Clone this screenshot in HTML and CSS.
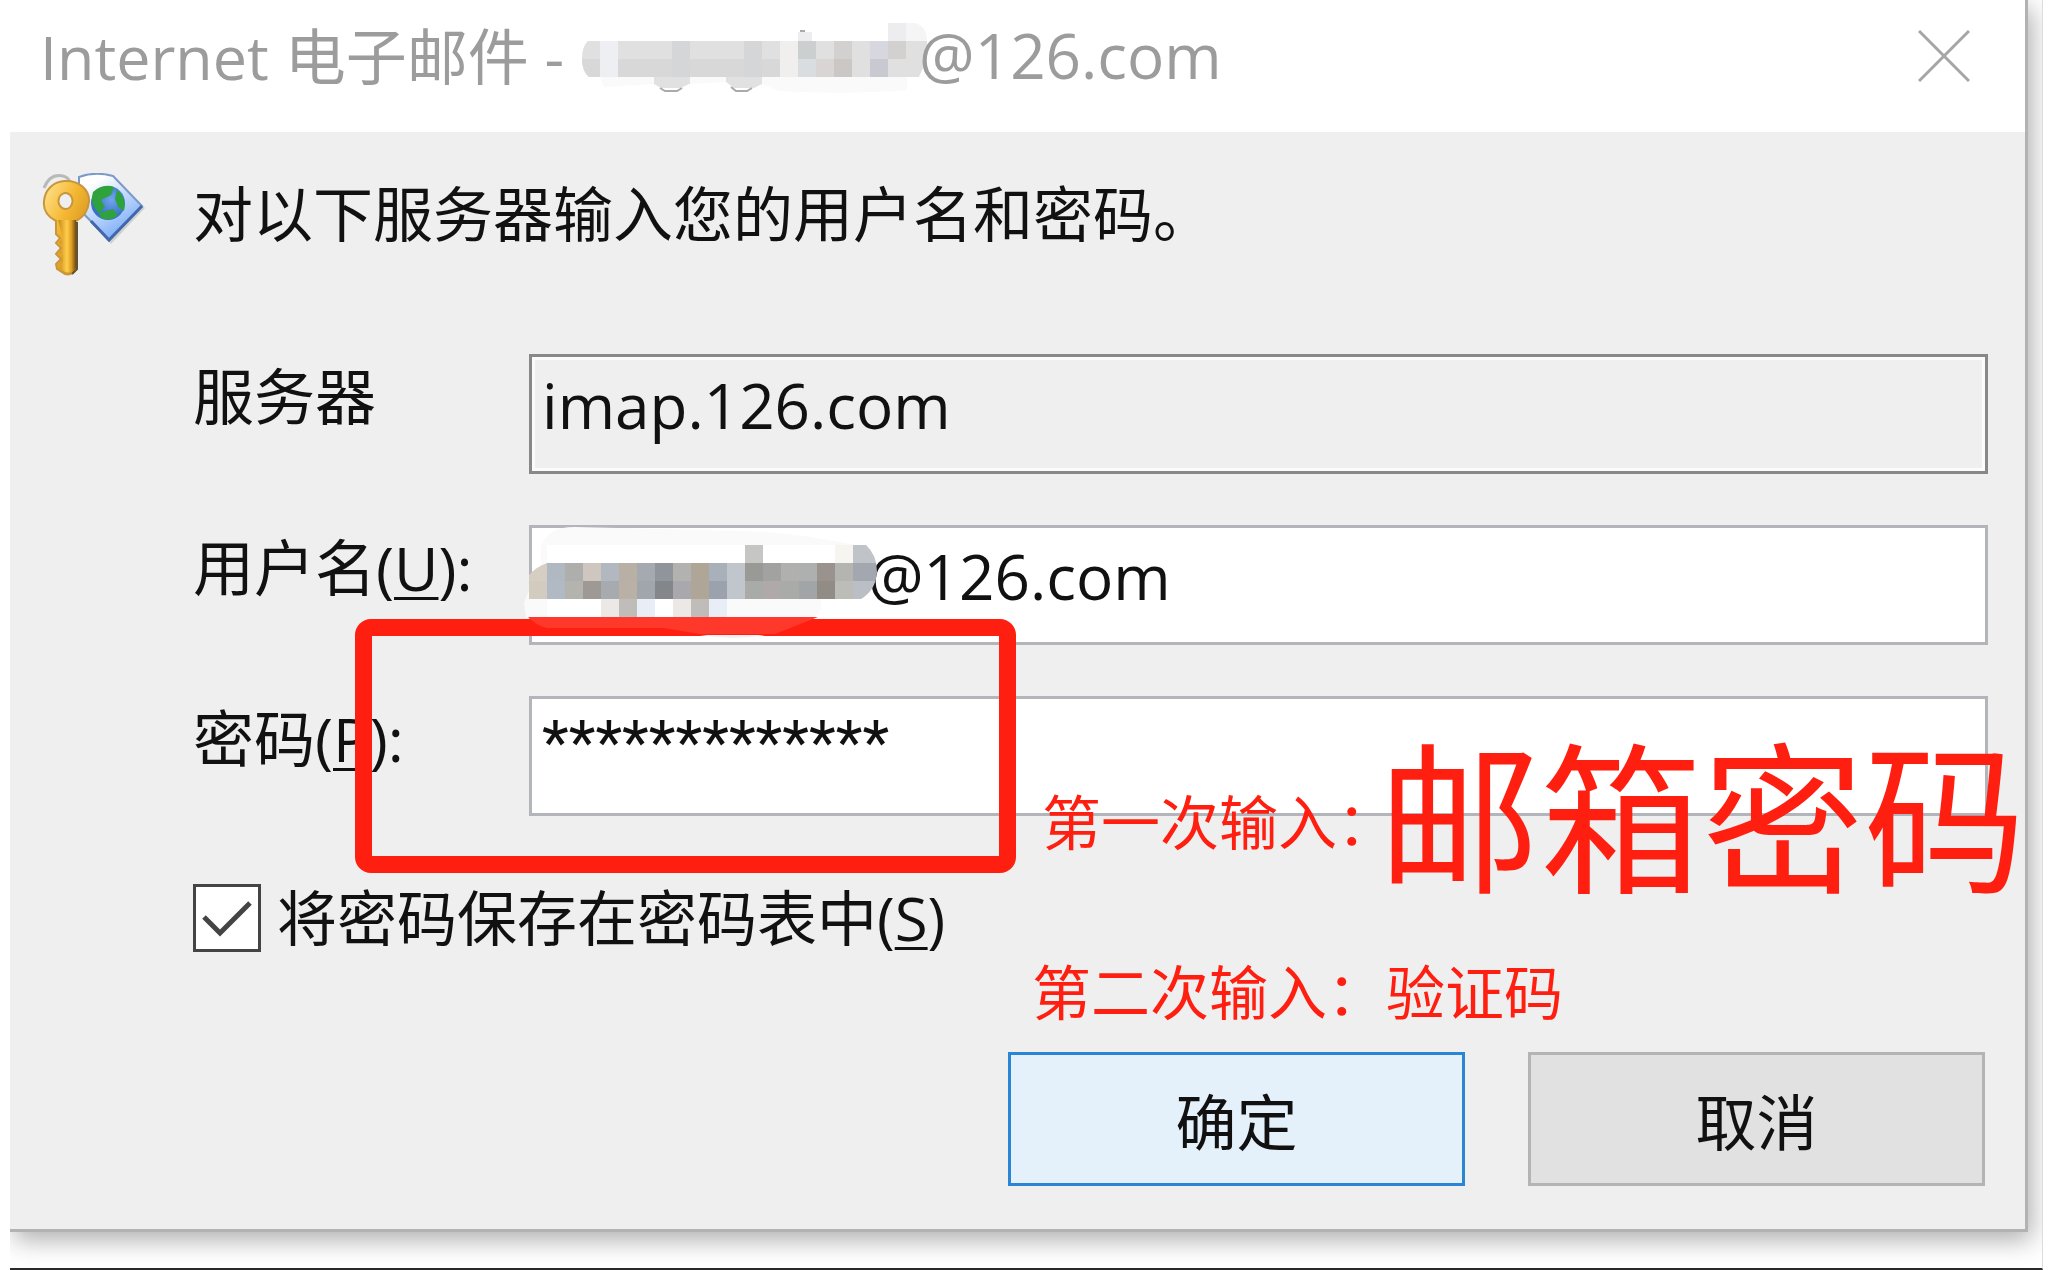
FILE: index.html
```html
<!DOCTYPE html>
<html lang="zh-CN">
<head>
    <meta charset="UTF-8">
    <title>Internet 电子邮件</title>
    <link rel="stylesheet" href="styles.css">
</head>
<body>
    <div id="wrap">
    <div class="dialog">
        <div class="titlebar">
            <h1>Internet 电子邮件 -</h1>
            <svg class="mosaic" width="345" height="80" viewBox="583 20 345 80">
                <defs>
                    <clipPath id="titleClip"><path d="M589 41H795V32H813V41H889V23H916Q928 26 928 41Q928 62 920 77L908 90Q850 95 780 91L763 84L755 88H735L727 82L690 84L682 88H662L655 84L605 87L601 77H590Q583 71 583 59Q583 46 589 41Z"/></clipPath>
                </defs>
                <g clip-path="url(#titleClip)">
                    <path fill="#e1e0e0" d="M583 41h345v36h-345z"/>
                    <path fill="#fafafa" d="M601 77h307v18h-307z"/>
                    <path fill="#d9d8d8" d="M583 59h18v18h-18zM619 59h162v18h-162z"/>
                    <path fill="#eeeff2" d="M601 41h18v36h-18z"/>
                    <path fill="#d5d6d8" d="M673 41h18v36h-18zM745 41h18v36h-18z"/>
                    <path fill="#f1efed" d="M781 41h18v36h-18z"/>
                    <path fill="#ededef" d="M799 30h18v11h-18zM889 23h18v18h-18z"/>
                    <path fill="#cccfd0" d="M799 41h18v18h-18z"/>
                    <path fill="#dadde0" d="M799 59h18v18h-18z"/>
                    <path fill="#d8d5d4" d="M817 59h18v18h-18z"/>
                    <path fill="#d2d1d0" d="M835 41h18v18h-18zM889 41h18v18h-18z"/>
                    <path fill="#cac7c4" d="M835 59h18v18h-18z"/>
                    <path fill="#d6d7df" d="M871 41h18v18h-18z"/>
                    <path fill="#c9cad1" d="M871 59h18v18h-18z"/>
                    <path fill="#f5f5f5" d="M907 23h21v18h-21z"/>
                    <path fill="#e2e1e1" d="M655 77h36v11h-36zM727 77h36v11h-36z"/>
                </g>
                <path d="M661 88l5 3h12l5-3M732 87l5 4h11l5-3M801 31h5" fill="none" stroke="#aaa" stroke-width="2"/>
            </svg>
            <span class="host">@126.com</span>
            <button class="close" type="button" aria-label="关闭">
                <svg width="52" height="52" viewBox="0 0 52 52"><path d="M1 1L51 51M51 1L1 51" stroke="#a6a6a6" stroke-width="3"/></svg>
            </button>
        </div>
        <form class="content">
            <div class="intro">
                <svg class="icon" width="112" height="112" viewBox="0 0 112 112">
                    <defs>
                        <linearGradient id="gold" x1="0" x2="1" y1="0" y2="1">
                            <stop offset="0" stop-color="#ffe694"/>
                            <stop offset=".4" stop-color="#f5b833"/>
                            <stop offset="1" stop-color="#bd7a10"/>
                        </linearGradient>
                        <linearGradient id="shaft" x1="0" x2="1">
                            <stop offset="0" stop-color="#c88a18"/>
                            <stop offset=".5" stop-color="#ffce4c"/>
                            <stop offset=".75" stop-color="#dd9d20"/>
                            <stop offset="1" stop-color="#6d4b18"/>
                        </linearGradient>
                        <linearGradient id="tag" x1="0" x2=".6" y1="0" y2="1">
                            <stop offset=".2" stop-color="#fff"/>
                            <stop offset="1" stop-color="#77aaf8"/>
                        </linearGradient>
                        <radialGradient id="sea" cx=".6" cy=".4">
                            <stop offset="0" stop-color="#71a6ee"/>
                            <stop offset="1" stop-color="#3a72c8"/>
                        </radialGradient>
                    </defs>
                    <path d="M40 5Q54 -1 73 4L104 35L70 71L42 40Z" fill="#999" opacity=".35"/>
                    <path d="M38 4Q54 -2 72 3L101 33L68 67L38 36Z" fill="url(#tag)" stroke="#7b9ac9" stroke-width="2"/>
                    <path d="M101 33L68 67L50 48" fill="none" stroke="#4068ab" stroke-width="3"/>
                    <circle cx="67" cy="30" r="17" fill="url(#sea)"/>
                    <path d="M52 19Q62 10 73 14L70 22L60 27L64 34L58 40Q48 30 52 19ZM76 17Q86 24 83 38L77 34L74 26ZM58 40L72 36L77 42Q69 49 60 45Z" fill="#2fa23d"/>
                    <path d="M3 15Q9 0 22 3Q31 5 29 17" fill="none" stroke="#b9b9b9" stroke-width="3"/>
                    <path fill-rule="evenodd" d="M23 8C38 7 49 17 48 29C47 39 41 45 35 48L35 96Q31 103 24 101L16 96L15 91L20 86L15 81L20 75L15 70L19 65L15 61V48C7 44 2 37 3 28C4 17 12 9 23 8ZM24 20A7 8 0 1 0 25 36A7 8 0 1 0 24 20Z" fill="url(#gold)" stroke="#c8963c" stroke-width="2"/>
                    <path d="M17 47H35V95Q30 101 24 99L19 95L22 88V82L18 80L22 75L18 69L22 65Z" fill="url(#shaft)"/>
                    <path d="M36 49V96L31 101" fill="none" stroke="#65512e" stroke-width="2"/>
                </svg>
                <p>对以下服务器输入您的用户名和密码。</p>
            </div>
            <div class="row">
                <label for="server">服务器</label>
                <div class="field"><input id="server" class="server" type="text" value="imap.126.com" readonly></div>
            </div>
            <div class="row">
                <label for="user">用户名(<u>U</u>):</label>
                <div class="field"><input id="user" class="user" type="text" value="@126.com"></div>
            </div>
            <div class="row">
                <label for="pwd">密码(<u>P</u>):</label>
                <div class="field"><input id="pwd" class="pwd" type="text" value="*************"></div>
            </div>
            <div class="save">
                <input id="save" type="checkbox" checked>
                <label for="save">将密码保存在密码表中(<u>S</u>)</label>
            </div>
            <div class="btns">
                <button class="ok" type="submit">确定</button>
                <button class="cancel" type="button">取消</button>
            </div>

            <!-- 标注 -->
            <div class="mark"></div>
            <svg class="mosaic-user" width="360" height="120" viewBox="520 522 360 120">
                <defs>
                    <clipPath id="userClip"><path d="M547 545H866Q877 555 877 572Q876 590 861 599H529V575Q536 567 547 563Z"/></clipPath>
                </defs>
                <path fill="#fafafa" d="M541 563V548Q545 527 575 527L740 531Q800 533 855 545V599H820Q825 611 812 618H526L524 603L529 590Z"/>
                <path fill="#ff382c" d="M528 617H818L775 634H700L664 628H548Q538 627 528 617Z"/>
                <path fill="#f0f0f0" d="M700 635H765Q735 641 700 635Z"/>
                <path fill="#fff" d="M547 545h330v18H547zM547 599h54v18h-54zM655 599h18v18h-18z"/>
                <g id="cells" clip-path="url(#userClip)"></g>
                <path fill="#ece8e6" d="M601 599h18v18h-18zM673 599h18v18h-18z"/>
                <path fill="#bfbcb9" d="M619 599h18v18h-18zM691 599h18v18h-18z"/>
                <path fill="#e9eef6" d="M637 599h18v18h-18zM709 599h18v18h-18z"/>
            </svg>
            <p class="note note1">第一次输入：</p>
            <p class="note big">邮箱密码</p>
            <p class="note note2">第二次输入：验证码</p>
        </form>
    </div>
    </div>

    <script>
        //马赛克色块
        let rows = [
            ",,,,,,,,,,,,#c6c7c5,,,,,#f6f5f0,#c0c4c8,#c0c4c8",
            "#d6cdc3,#b0b8c2,#aeaeac,#cfc6c0,#b1b8bf,#b8b0a5,#a5aab0,#90959b,#b2b2b0,#b0a698,#a8b0ba,#c0c6cb,#999996,#a2a2a1,#b0b0ae,#aeb0b0,#9a928c,#b4b5b0,#a2a7b0,#a2a7b0",
            "#d3cac0,#b1bac4,#b5b3ae,#9e9995,#a7abb0,#b9b1a5,#a0a6ac,#83868b,#a9a9ad,#b0a697,#9ba1ad,#c0c6cb,#a9aba9,#b0a9aa,#a9aba9,#a2a5a7,#928c87,#bcbdb9,#babfc6,#babfc6"
        ];
        let cells = document.querySelector("#cells");
        rows.forEach((row,y)=>{
            row.split(",").forEach((color,x)=>{
                if( !color ) return;
                let r = document.createElementNS("http://www.w3.org/2000/svg","rect");
                r.setAttribute("x",529 + x*18);
                r.setAttribute("y",545 + y*18);
                r.setAttribute("width",18);
                r.setAttribute("height",18);
                r.setAttribute("fill",color);
                cells.appendChild(r);
            });
        });
    </script>
</body>
</html>
```
FILE: styles.css
```css
*{box-sizing: border-box;}
body,p,h1{margin:0;}
body,input,button{
    font-family: "Open Sans","Noto Sans CJK SC",sans-serif;
    font-size: 61px;
    color: #111;
}
body{background: #fff;}

#wrap{
    overflow: hidden;
    min-height: 100vh;
    margin: 0 11px 0 10px;
    padding: 0 14px 0 0;
    border-right: 1px solid #ddd;
    border-bottom: 2px solid #2a2a2a;
}
.dialog{
    border-right: 3px solid #b2b2b2;
    border-bottom: 3px solid #b2b2b2;
    background: #efefef;
    box-shadow: 4px 8px 24px rgba(0,0,0,.32);
}

.titlebar{
    display: flex;
    align-items: center;
    height: 132px;
    padding: 0 55px 20px 30px;
    background: #fff;
    color: #9c9c9c;
}
.titlebar h1{
    padding-bottom: 6px;
    font-size: 61px;
    font-weight: normal;
    white-space: nowrap;
}
.titlebar .mosaic{
    flex: none;
    margin: 8px 0 0 18px;
}
.titlebar .host{
    margin-left: -8px;
    padding-bottom: 2px;
    font-size: 62px;
}
.titlebar .close{
    display: flex;
    margin-left: auto;
    padding: 0;
    border: none;
    background: none;
}

.content{
    position: relative;
    padding: 36px 37px 43px 31px;
}
.intro{
    display: flex;
    height: 186px;
}
.intro .icon{
    flex: none;
    width: 112px;
    margin: 5px 40px 0 0;
}
.intro p{
    font-size: 60px;
    line-height: 92px;
}
.row{
    display: flex;
    margin-bottom: 51px;
    padding-left: 152px;
}
.row label{
    flex: none;
    width: 336px;
    line-height: 86px;
}
u{
    text-decoration-thickness: 3px;
    text-underline-offset: 6px;
}
.field{flex: 1;}
.field input{
    display: block;
    width: 100%;
    height: 120px;
    padding: 0 12px 18px 10px;
    border: 3px solid #b4b4bb;
    border-radius: 0;
    background: #fff;
    font-size: 62px;
    outline: none;
}
.field .server{
    border-color: #888;
    background: #efefef;
    box-shadow: inset 0 0 0 3px #fbfbfb;
}
.field .user{padding-left: 336px;}
.field .pwd{
    padding-bottom: 28px;
    font-family: Roboto,sans-serif;
}

.save{
    display: flex;
    align-items: center;
    height: 92px;
    margin: 56px 0 0 152px;
}
.save input{
    appearance: none;
    width: 68px;
    height: 68px;
    margin: 0 16px 0 0;
    border: 3px solid #444;
    background: #fff;
}
.save input:checked{
    background: #fff url('data:image/svg+xml,<svg xmlns="http://www.w3.org/2000/svg" viewBox="0 0 62 62"><path d="M8 30L24 46L54 16" fill="none" stroke="%23444" stroke-width="5"/></svg>');
}
.save label{
    font-size: 60px;
    line-height: 88px;
}
.btns{
    display: flex;
    justify-content: flex-end;
    gap: 63px;
    margin-top: 88px;
    padding-right: 3px;
}
.btns button{
    width: 457px;
    height: 134px;
    padding: 0;
    border: 3px solid #b4b4b4;
    background: #e1e1e1;
}
.btns .ok{
    border-color: #2a86d4;
    background: #e4f0fa;
}

.mark{
    position: absolute;
    left: 345px;
    top: 487px;
    width: 661px;
    height: 254px;
    border: 17px solid #ff1f10;
    border-radius: 16px;
}
.mosaic-user{
    position: absolute;
    left: 510px;
    top: 390px;
}
.note{
    position: absolute;
    font-size: 59px;
    line-height: 88px;
    color: #ff1f10;
    white-space: nowrap;
}
.note1{
    left: 1032px;
    top: 646px;
}
.note2{
    left: 1022px;
    top: 816px;
}
.big{
    left: 1368px;
    top: 606px;
    font-size: 162px;
    line-height: 160px;
}
```
